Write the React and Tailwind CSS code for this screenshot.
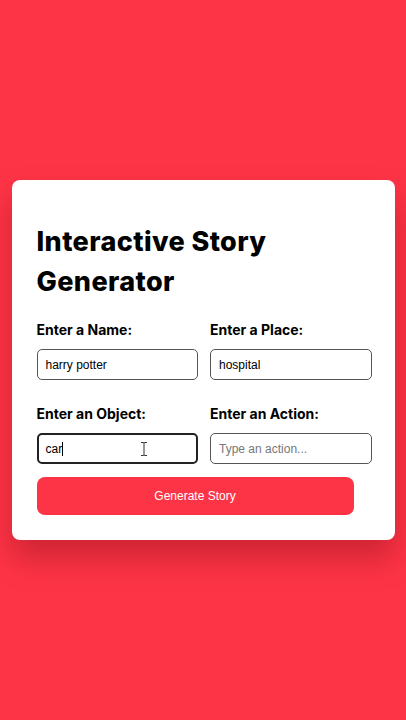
export default function App() {
  const heading = { fontFamily: 'Inter, "Noto Sans", sans-serif' };
  const body = { fontFamily: '"Liberation Sans", Arial, sans-serif' };

  return (
    <div className="min-h-screen w-full bg-[#fd3446] flex items-start justify-center pt-[180px]">
      <div className="w-[383px] bg-white rounded-lg pt-[42px] pl-[25px] pr-[23px] pb-[25px] shadow-[0_18px_30px_rgba(120,10,20,0.35)]">
        <h1 style={heading} className="text-[27px] leading-[40px] font-extrabold text-black tracking-[0.4px] w-[270px]">
          Interactive Story Generator
        </h1>

        <div className="grid grid-cols-2 gap-x-[12px] mt-[17px]">
          <Field label="Enter a Name:" value="harry potter" />
          <Field label="Enter a Place:" value="hospital" />
        </div>

        <div className="grid grid-cols-2 gap-x-[12px] mt-[23px]">
          <div>
            <label style={heading} className="block text-[14px] leading-[22px] font-bold text-black">
              Enter an Object:
            </label>
            <div className="relative mt-[8px] h-[31px] rounded-[5px] border-2 border-[#222] flex items-center pl-[7px]">
              <span style={body} className="text-[12px] text-black">car</span>
              <span className="w-px h-[14px] bg-black" />
              {/* mouse I-beam */}
              <svg className="absolute left-[101px] top-[7px]" width="8" height="14" viewBox="0 0 8 14" fill="none" stroke="#333" strokeWidth="1">
                <path d="M1 0.5h2.5c.5 0 .5.5.5 1v11c0 .5 0 1-.5 1H1M7 0.5H4.5c-.5 0-.5.5-.5 1M4 12.5c0 .5 0 1 .5 1H7" />
              </svg>
            </div>
          </div>
          <Field label="Enter an Action:" placeholder="Type an action..." />
        </div>

        <button
          style={body}
          className="mt-[13px] w-[317px] h-[38px] rounded-lg bg-[#fd3446] text-white text-[12px]"
        >
          Generate Story
        </button>
      </div>
    </div>
  );
}

function Field({ label, value, placeholder }) {
  return (
    <div>
      <label
        style={{ fontFamily: 'Inter, "Noto Sans", sans-serif' }}
        className="block text-[14px] leading-[22px] font-bold text-black"
      >
        {label}
      </label>
      <input
        readOnly
        defaultValue={value}
        placeholder={placeholder}
        style={{ fontFamily: '"Liberation Sans", Arial, sans-serif' }}
        className="mt-[8px] w-full h-[31px] rounded-[5px] border border-[#555] px-[8px] text-[12px] text-black placeholder:text-[#777] outline-none"
      />
    </div>
  );
}
